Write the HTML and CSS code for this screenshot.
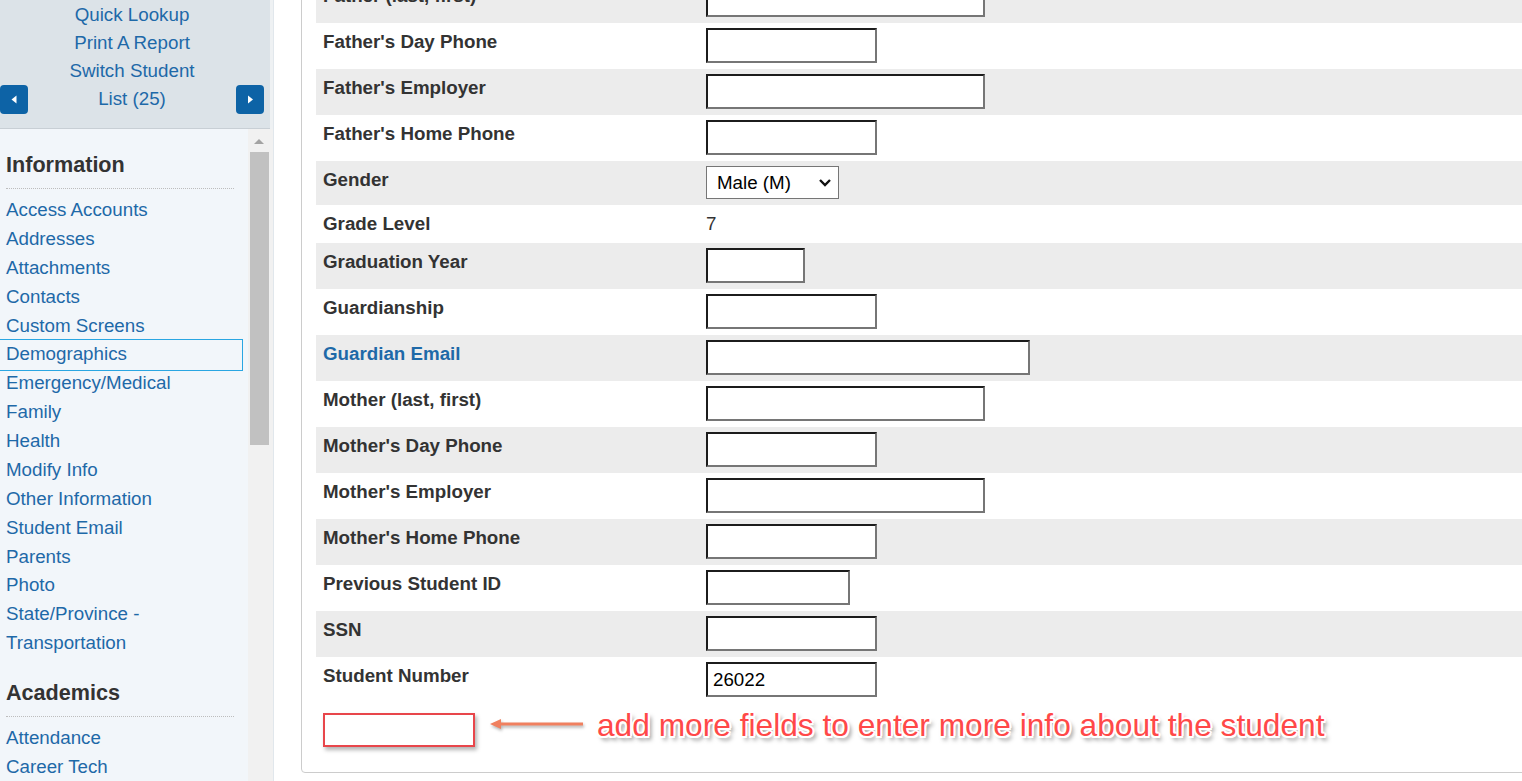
FILE: index.html
```html
<!DOCTYPE html>
<html lang="en">
<head>
<meta charset="utf-8">
<title>Demographics</title>
<link rel="stylesheet" href="styles.css">
</head>
<body>
<div class="app">
  <aside class="sidebar">
    <div class="side-head">
      <a class="head-link">Quick Lookup</a>
      <a class="head-link">Print A Report</a>
      <a class="head-link">Switch Student</a>
      <div class="list-row">
        <span class="nav-btn"><svg width="28" height="29" viewBox="0 0 28 29"><polygon points="16.5,10.5 11.5,14.5 16.5,18.5" fill="#fff"/></svg></span>
        <a class="head-link">List (25)</a>
        <span class="nav-btn"><svg width="28" height="29" viewBox="0 0 28 29"><polygon points="12,10.5 17,14.5 12,18.5" fill="#fff"/></svg></span>
      </div>
    </div>
    <div class="side-body">
      <nav class="side-menu">
        <h3 class="menu-title">Information</h3>
        <a class="menu-item">Access Accounts</a>
        <a class="menu-item">Addresses</a>
        <a class="menu-item">Attachments</a>
        <a class="menu-item">Contacts</a>
        <a class="menu-item">Custom Screens</a>
        <a class="menu-item active">Demographics</a>
        <a class="menu-item">Emergency/Medical</a>
        <a class="menu-item">Family</a>
        <a class="menu-item">Health</a>
        <a class="menu-item">Modify Info</a>
        <a class="menu-item">Other Information</a>
        <a class="menu-item">Student Email</a>
        <a class="menu-item">Parents</a>
        <a class="menu-item">Photo</a>
        <a class="menu-item">State/Province - Transportation</a>
        <h3 class="menu-title">Academics</h3>
        <a class="menu-item">Attendance</a>
        <a class="menu-item">Career Tech</a>
      </nav>
      <div class="scrollbar">
        <div class="sb-up"><svg width="12" height="8" viewBox="0 0 12 8"><polygon points="1,7 6,2 11,7" fill="#a3a3a3"/></svg></div>
        <div class="sb-thumb"></div>
      </div>
    </div>
  </aside>

  <main class="main">
    <section class="panel">
      <div class="form-row"><div class="label">Father (last, first)</div><div class="value"><input class="txt w-lg" type="text"></div></div>
      <div class="form-row"><div class="label">Father's Day Phone</div><div class="value"><input class="txt w-md" type="text"></div></div>
      <div class="form-row"><div class="label">Father's Employer</div><div class="value"><input class="txt w-lg" type="text"></div></div>
      <div class="form-row"><div class="label">Father's Home Phone</div><div class="value"><input class="txt w-md" type="text"></div></div>
      <div class="form-row"><div class="label">Gender</div><div class="value"><select class="sel"><option>Male (M)</option></select></div></div>
      <div class="form-row static"><div class="label">Grade Level</div><div class="value">7</div></div>
      <div class="form-row"><div class="label">Graduation Year</div><div class="value"><input class="txt w-sm" type="text"></div></div>
      <div class="form-row"><div class="label">Guardianship</div><div class="value"><input class="txt w-md" type="text"></div></div>
      <div class="form-row"><div class="label link">Guardian Email</div><div class="value"><input class="txt w-xl" type="text"></div></div>
      <div class="form-row"><div class="label">Mother (last, first)</div><div class="value"><input class="txt w-lg" type="text"></div></div>
      <div class="form-row"><div class="label">Mother's Day Phone</div><div class="value"><input class="txt w-md" type="text"></div></div>
      <div class="form-row"><div class="label">Mother's Employer</div><div class="value"><input class="txt w-lg" type="text"></div></div>
      <div class="form-row"><div class="label">Mother's Home Phone</div><div class="value"><input class="txt w-md" type="text"></div></div>
      <div class="form-row"><div class="label">Previous Student ID</div><div class="value"><input class="txt w-id" type="text"></div></div>
      <div class="form-row"><div class="label">SSN</div><div class="value"><input class="txt w-md" type="text"></div></div>
      <div class="form-row"><div class="label">Student Number</div><div class="value"><input class="txt w-md" type="text" value="26022"></div></div>
      <div class="note-row">
        <div class="note-box"></div>
        <svg class="note-arrow" width="94" height="14" viewBox="0 0 94 14"><line x1="9" y1="7" x2="93" y2="7" stroke="#f0805f" stroke-width="3"/><polygon points="0,7 11,2 11,12" fill="#f0805f"/></svg>
        <span class="note-text">add more fields to enter more info about the student</span>
      </div>
    </section>
  </main>
</div>
</body>
</html>
```

FILE: styles.css
```css
html, body {
  margin: 0;
  height: 100%;
  overflow: hidden;
  background: #fff;
}
body {
  font-family: "Liberation Sans", Arial, sans-serif;
  font-size: 18.75px;
  color: #333;
}
.app {
  display: flex;
  height: 781px;
}

/* ---------- sidebar ---------- */
.sidebar {
  width: 273px;
  flex: none;
  display: flex;
  flex-direction: column;
  border-right: 1px solid #e1e7ec;
  background: #eef1f3;
}
.side-head {
  width: 270px;
  box-sizing: border-box;
  padding: 1px 6px 15px 0;
  background: #dce3e8;
  border-bottom: 1px solid #c8cfd5;
  text-align: center;
  line-height: 28px;
}
.head-link {
  display: block;
  color: #1e69a8;
  text-decoration: none;
}
.list-row {
  display: flex;
  align-items: center;
  justify-content: space-between;
  height: 28px;
}
.nav-btn {
  display: block;
  width: 28px;
  height: 29px;
  border-radius: 4px;
  background: #0d63a6;
}
.nav-btn svg { display: block; }

.side-body {
  flex: 1;
  display: flex;
  overflow: hidden;
  background: #f2f6fa;
}
.side-menu {
  width: 248px;
  flex: none;
}
.menu-title {
  margin: 23px 14px 7px 6px;
  padding-bottom: 11px;
  border-bottom: 1px dotted #bdbdbd;
  font-size: 21.6px;
  line-height: 25px;
  font-weight: bold;
  color: #333;
}
.menu-item + .menu-title {
  margin-top: 22px;
}
.menu-item {
  position: relative;
  display: block;
  padding-left: 6px;
  line-height: 28.88px;
  color: #1e69a8;
  text-decoration: none;
}
.menu-item.active::after {
  content: "";
  position: absolute;
  left: -1px;
  right: 5px;
  top: -1px;
  bottom: -2px;
  border: 1px solid #2aa6e2;
}
.scrollbar {
  width: 25px;
  flex: none;
  background: #f1f1f1;
}
.sb-up {
  height: 23px;
  display: flex;
  align-items: center;
  justify-content: center;
  padding-right: 4px;
}
.sb-up svg { display: block; }
.sb-thumb {
  margin-left: 2px;
  width: 19px;
  height: 293px;
  background: #c1c1c1;
}

/* ---------- main ---------- */
.main {
  flex: 1;
  min-width: 0;
  padding-left: 27px;
}
.panel {
  margin-top: -24px;
  margin-right: -12px;
  padding: 0 0 25px 14px;
  border: 1px solid #cccccc;
  border-radius: 4px;
}
.form-row {
  display: grid;
  grid-template-columns: 390px 1fr;
}
.form-row:nth-child(odd) {
  background: #ececec;
}
.label {
  padding: 8px 0 0 7px;
  line-height: 22px;
  font-weight: bold;
  color: #333;
}
.label.link {
  color: #1e69a8;
}
.value {
  padding: 5px 0 6px;
  line-height: 22px;
}
.form-row.static .label,
.form-row.static .value {
  padding: 8px 0 8px;
}
.form-row.static .label {
  padding-left: 7px;
}
.txt {
  display: block;
  box-sizing: border-box;
  height: 35px;
  margin: 0;
  padding: 0 5px;
  border: 2px solid;
  border-color: #1c1c1c #767676 #767676 #1c1c1c;
  background: #fff;
  font-family: "Liberation Sans", Arial, sans-serif;
  font-size: 18.75px;
  color: #000;
  outline: none;
}
.w-lg { width: 279px; }
.w-md { width: 171px; }
.w-sm { width: 99px; }
.w-xl { width: 324px; }
.w-id { width: 144px; }

.sel {
  display: block;
  box-sizing: border-box;
  width: 133px;
  height: 33px;
  margin: 0;
  padding: 0 0 0 10px;
  border: 1px solid #767676;
  border-radius: 0;
  -webkit-appearance: none;
  appearance: none;
  background: #fff url("data:image/svg+xml;utf8,<svg xmlns='http://www.w3.org/2000/svg' width='14' height='9' viewBox='0 0 14 9'><polyline points='2,2 7,7 12,2' fill='none' stroke='%23111' stroke-width='2.4'/></svg>") no-repeat right 6px center;
  font-family: "Liberation Sans", Arial, sans-serif;
  font-size: 18.75px;
  color: #000;
}

/* ---------- annotation ---------- */
.note-row {
  display: flex;
  align-items: flex-start;
  padding: 10px 0 0 7px;
}
.note-box {
  width: 152px;
  height: 34px;
  box-sizing: border-box;
  border: 2px solid #e8464b;
  box-shadow: 2px 3px 4px rgba(0, 0, 0, 0.3);
  flex: none;
}
.note-arrow {
  display: block;
  flex: none;
  margin: 4px 0 0 15px;
  filter: drop-shadow(1px 2px 1.5px rgba(0, 0, 0, 0.3));
}
.note-text {
  margin: -6px 0 0 13px;
  font-size: 31.7px;
  line-height: 36px;
  color: #ff4848;
  white-space: nowrap;
  text-shadow:
    2px 0 0 #fff, -2px 0 0 #fff, 0 2px 0 #fff, 0 -2px 0 #fff,
    1.5px 1.5px 0 #fff, -1.5px 1.5px 0 #fff, 1.5px -1.5px 0 #fff, -1.5px -1.5px 0 #fff,
    3px 4px 4px rgba(0, 0, 0, 0.5);
}
```
